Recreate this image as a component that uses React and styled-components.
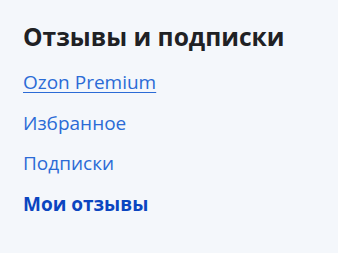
import React from "react";
import styled, { createGlobalStyle } from "styled-components";

const Global = createGlobalStyle`
  html, body { margin: 0; padding: 0; background: #f4f7fb; }
  body { font-family: "Open Sans", "Liberation Sans", sans-serif; }
`;

const Panel = styled.nav`
  width: 338px;
  height: 253px;
  box-sizing: border-box;
  padding: 20.5px 23px;
  background: #f4f7fb;
  display: flex;
  flex-direction: column;
`;

const Title = styled.h2`
  margin: 0 0 9.5px;
  font-size: 24.6px;
  line-height: 32px;
  font-weight: 700;
  color: #202124;
  white-space: nowrap;
`;

const List = styled.ul`
  list-style: none;
  margin: 0;
  padding: 0;
  display: flex;
  flex-direction: column;
`;

const Item = styled.li`
  height: 40.6px;
  display: flex;
  align-items: center;
`;

const Link = styled.a`
  font-size: 19px;
  line-height: 24px;
  color: ${(p) => (p.$active ? "#0b45c0" : "#2b6bd6")};
  font-weight: ${(p) => (p.$active ? 700 : 400)};
  text-decoration: ${(p) => (p.$underline ? "underline" : "none")};
  text-decoration-thickness: 1px;
  text-underline-offset: 3px;
  cursor: pointer;
`;

export default function App() {
  return (
    <>
      <Global />
      <Panel>
        <Title>Отзывы и подписки</Title>
        <List>
          <Item><Link $underline>Ozon Premium</Link></Item>
          <Item><Link>Избранное</Link></Item>
          <Item><Link>Подписки</Link></Item>
          <Item><Link $active>Мои отзывы</Link></Item>
        </List>
      </Panel>
    </>
  );
}
